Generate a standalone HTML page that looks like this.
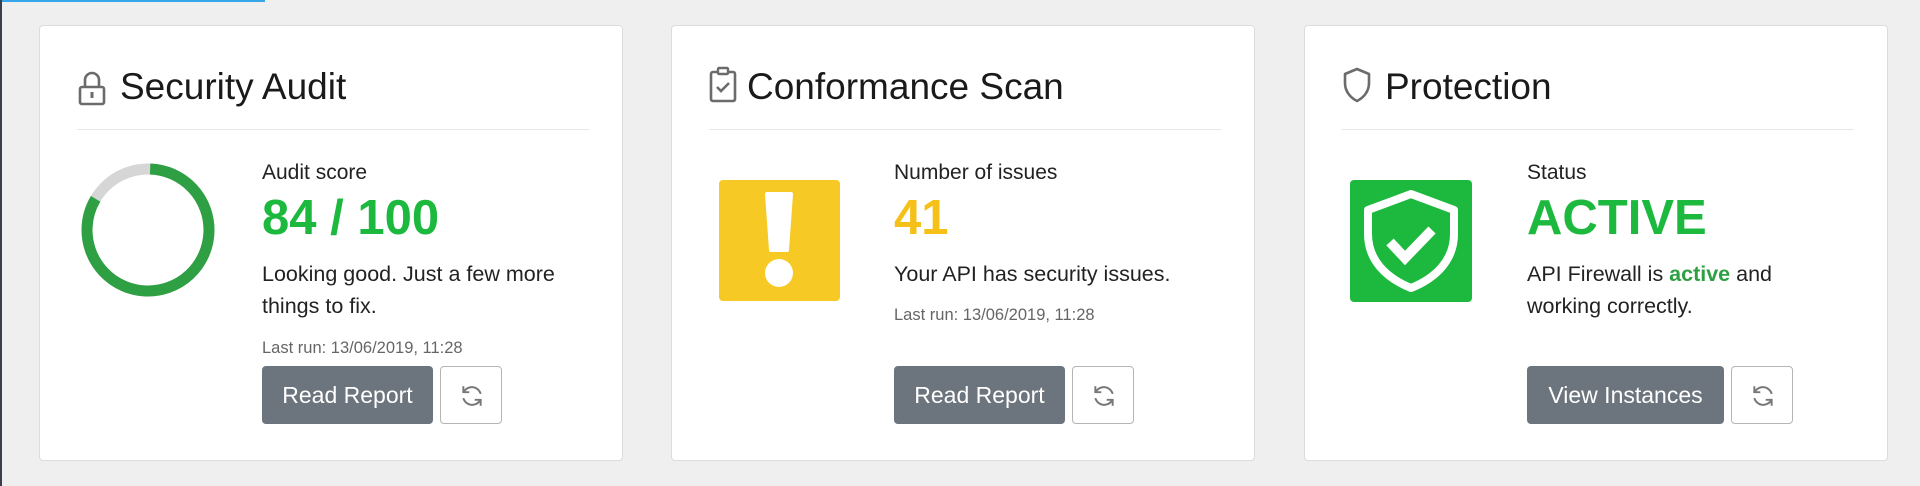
<!DOCTYPE html>
<html><head><meta charset="utf-8"><style>
*{margin:0;padding:0;box-sizing:border-box}
body{width:1920px;height:486px;background:#efefef;position:relative;overflow:hidden;font-family:"Liberation Sans",sans-serif;color:#212529}
.top{position:absolute;left:0;top:0;width:265px;height:2px;background:#35a6e8}
.lft{position:absolute;left:0;top:0;width:2px;height:486px;background:#3a3f4a}
.card{position:absolute;top:25px;width:584px;height:436px;background:#fff;border:1px solid #dcdcdc;border-radius:4px}
.title{position:absolute;top:38px;font-size:37px;line-height:46px;color:#1a1a1a}
.title svg{position:absolute;left:0;top:6px}
.title span{position:absolute;white-space:nowrap}
.hr{position:absolute;left:44px;width:512px;top:103px;height:1px;background:#e6e6e6}
.a{position:absolute;white-space:nowrap}
.lbl{font-size:21px;color:#222}
.big{font-size:49px;font-weight:bold;line-height:50px}
.txt{font-size:21.5px;line-height:32px;color:#222}
.small{font-size:16.5px;color:#666}
.btn{position:absolute;top:340px;height:58px;background:#6c757d;color:#fff;border-radius:4px;font-size:23px;line-height:58px;text-align:center}
.rf{position:absolute;top:340px;width:62px;height:58px;border:1px solid #b5b5b5;border-radius:4px;background:#fff}
.rf svg{position:absolute;left:18px;top:16px}
</style></head><body>
<div class="top"></div><div class="lft"></div>

<div class="card" style="left:39px">
 <div class="title" style="left:37px">
  <svg width="30" height="36" viewBox="0 0 30 36"><path d="M8 17V10a7 7 0 0 1 14 0v7" fill="none" stroke="#6b6b6b" stroke-width="2.6"/><rect x="3" y="17" width="24" height="17" rx="2" fill="none" stroke="#6b6b6b" stroke-width="2.6"/><rect x="13.5" y="22" width="3" height="6" fill="#6b6b6b"/></svg>
  <span style="left:43px;top:0">Security Audit</span></div>
 <div class="hr" style="left:37px"></div>
 <svg class="a" style="left:41px;top:137px" width="134" height="134" viewBox="0 0 134 134">
  <circle cx="67" cy="67" r="61" fill="none" stroke="#d6d6d6" stroke-width="11"/>
  <circle cx="67" cy="67" r="61" fill="none" stroke="#2ea043" stroke-width="11" stroke-dasharray="318 400" transform="rotate(-88 67 67)"/>
 </svg>
 <div class="a lbl" style="left:222px;top:135px">Audit score</div>
 <div class="a big" style="left:222px;top:167px;color:#1db93f">84 / 100</div>
 <div class="a txt" style="left:222px;top:232px">Looking good. Just a few more<br>things to fix.</div>
 <div class="a small" style="left:222px;top:313px">Last run: 13/06/2019, 11:28</div>
 <div class="btn" style="left:222px;width:171px">Read Report</div>
 <div class="rf" style="left:400px"><svg width="26" height="26" viewBox="0 0 24 24" fill="none" stroke="#777" stroke-width="1.8"><path d="M20 10A8.5 8.5 0 0 0 4.5 8"/><path d="M4 3v5.5h5.5"/><path d="M4 14a8.5 8.5 0 0 0 15.5 2"/><path d="M20 21v-5.5h-5.5"/></svg></div>
</div>

<div class="card" style="left:671px">
 <div class="title" style="left:37px">
  <svg width="28" height="38" viewBox="0 0 28 38" style="top:2px"><rect x="2" y="6" width="24" height="29" rx="2" fill="none" stroke="#6b6b6b" stroke-width="2.6"/><rect x="9" y="2" width="10" height="6" rx="1" fill="#fff" stroke="#6b6b6b" stroke-width="2.4"/><path d="M8 21l4 4 8-8" fill="none" stroke="#6b6b6b" stroke-width="2.6"/></svg>
  <span style="left:38px;top:0">Conformance Scan</span></div>
 <div class="hr" style="left:37px"></div>
 <svg class="a" style="left:47px;top:154px" width="121" height="121" viewBox="0 0 121 121"><rect width="121" height="121" rx="4" fill="#f7c924"/><path d="M48 14h24l-4 56h-16z" fill="#fff" stroke="#fff" stroke-width="4" stroke-linejoin="round"/><circle cx="60" cy="93" r="14" fill="#fff"/></svg>
 <div class="a lbl" style="left:222px;top:135px">Number of issues</div>
 <div class="a big" style="left:222px;top:167px;color:#f5c118">41</div>
 <div class="a txt" style="left:222px;top:232px">Your API has security issues.</div>
 <div class="a small" style="left:222px;top:280px">Last run: 13/06/2019, 11:28</div>
 <div class="btn" style="left:222px;width:171px">Read Report</div>
 <div class="rf" style="left:400px"><svg width="26" height="26" viewBox="0 0 24 24" fill="none" stroke="#777" stroke-width="1.8"><path d="M20 10A8.5 8.5 0 0 0 4.5 8"/><path d="M4 3v5.5h5.5"/><path d="M4 14a8.5 8.5 0 0 0 15.5 2"/><path d="M20 21v-5.5h-5.5"/></svg></div>
</div>

<div class="card" style="left:1304px">
 <div class="title" style="left:37px">
  <svg width="30" height="38" viewBox="0 0 30 38" style="top:2px"><path d="M15 3L3 8v9c0 9 6 15 12 18 6-3 12-9 12-18V8z" fill="none" stroke="#6b6b6b" stroke-width="2.6" stroke-linejoin="round"/></svg>
  <span style="left:43px;top:0">Protection</span></div>
 <div class="hr" style="left:37px"></div>
 <svg class="a" style="left:45px;top:154px" width="122" height="122" viewBox="0 0 122 122"><rect width="122" height="122" rx="4" fill="#1db93f"/><path d="M61 14L18 30v24c0 26 18 44 43 54 25-10 43-28 43-54V30z" fill="none" stroke="#fff" stroke-width="8" stroke-linejoin="round"/><path d="M40 62l15 16 27-28" fill="none" stroke="#fff" stroke-width="10"/></svg>
 <div class="a lbl" style="left:222px;top:135px">Status</div>
 <div class="a big" style="left:222px;top:167px;color:#1db93f">ACTIVE</div>
 <div class="a txt" style="left:222px;top:232px">API Firewall is <b style="color:#2ea043">active</b> and<br>working correctly.</div>
 <div class="btn" style="left:222px;width:197px">View Instances</div>
 <div class="rf" style="left:426px"><svg width="26" height="26" viewBox="0 0 24 24" fill="none" stroke="#777" stroke-width="1.8"><path d="M20 10A8.5 8.5 0 0 0 4.5 8"/><path d="M4 3v5.5h5.5"/><path d="M4 14a8.5 8.5 0 0 0 15.5 2"/><path d="M20 21v-5.5h-5.5"/></svg></div>
</div>
</body></html>
